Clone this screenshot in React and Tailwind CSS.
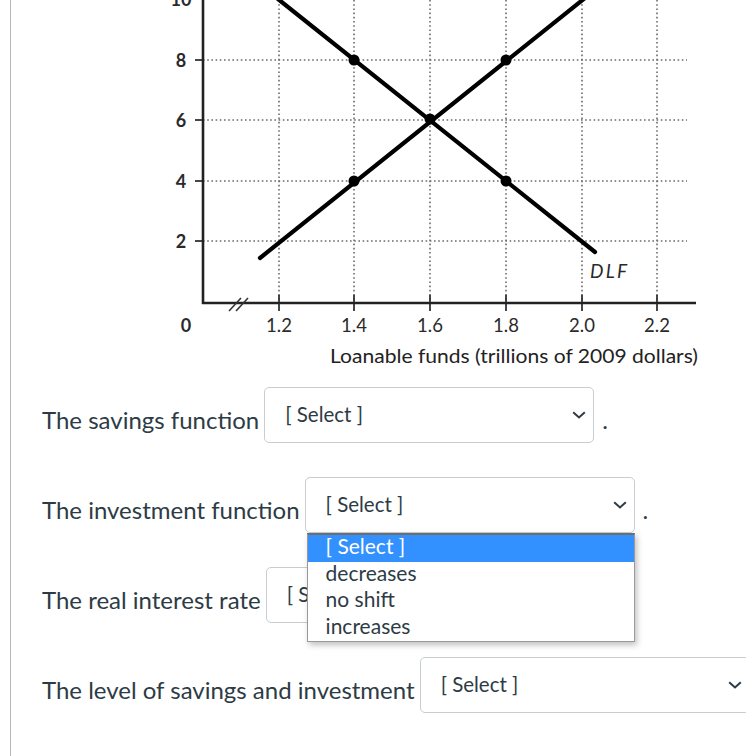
import React from "react";

const GX = [279, 354, 430, 506, 582, 657];
const XL = ["1.2", "1.4", "1.6", "1.8", "2.0", "2.2"];
const GY = [-1, 60, 120, 181, 241];
const YL = ["10", "8", "6", "4", "2"];

function Chart() {
  const font = "'Lato', 'Open Sans', sans-serif";
  return (
    <svg width="735" height="372" viewBox="11 0 735 372" className="block">
      {GY.map((y) => (
        <line key={"h" + y} x1="203" y1={y} x2="687" y2={y} stroke="#6b6b6b" strokeWidth="1.6" strokeDasharray="1.6 2.6" />
      ))}
      {GX.map((x) => (
        <line key={"v" + x} x1={x} y1="0" x2={x} y2="303" stroke="#6b6b6b" strokeWidth="1.6" strokeDasharray="1.6 2.6" />
      ))}
      {GY.map((y) => (
        <line key={"t" + y} x1="195" y1={y} x2="203" y2={y} stroke="#333" strokeWidth="1.8" />
      ))}
      {GX.map((x) => (
        <line key={"xt" + x} x1={x} y1="295" x2={x} y2="311" stroke="#333" strokeWidth="1.8" />
      ))}
      <line x1="203" y1="0" x2="203" y2="304" stroke="#222" strokeWidth="2.6" />
      <line x1="202" y1="303" x2="696" y2="303" stroke="#222" strokeWidth="2.6" />
      <line x1="229" y1="311" x2="241" y2="298" stroke="#333" strokeWidth="1.6" />
      <line x1="236" y1="311" x2="248" y2="298" stroke="#333" strokeWidth="1.6" />
      {/* DLF */}
      <line x1="278" y1="-1" x2="595" y2="252" stroke="#000" strokeWidth="4.2" strokeLinecap="round" />
      {/* SLF */}
      <line x1="260" y1="258" x2="590" y2="-6" stroke="#000" strokeWidth="4.2" strokeLinecap="round" />
      {[[354, 60], [506, 60], [430, 119], [354, 181], [506, 181]].map(([x, y]) => (
        <circle key={x + "-" + y} cx={x} cy={y} r="5.5" fill="#000" />
      ))}
      {YL.map((t, i) => (
        <text key={t} x="181" y={GY[i] + 6.5} textAnchor="middle" fontFamily={font} fontSize="18" fontWeight="700" fill="#2a2a2a">
          {t}
        </text>
      ))}
      <text x="186" y="331.5" textAnchor="middle" fontFamily={font} fontSize="18" fontWeight="700" fill="#2a2a2a">0</text>
      {XL.map((t, i) => (
        <text key={t} x={GX[i]} y="331.5" textAnchor="middle" fontFamily={font} fontSize="18.5" fill="#2a2a2a">
          {t}
        </text>
      ))}
      <text x="590" y="278" fontFamily={font} fontSize="19" fontStyle="italic" letterSpacing="2.2" fill="#2a2a2a">DLF</text>
      <text x="330" y="363" fontFamily={font} fontSize="18.5" fill="#222" textLength="368" lengthAdjust="spacingAndGlyphs">
        Loanable funds (trillions of 2009 dollars)
      </text>
    </svg>
  );
}

function Chevron() {
  return (
    <svg width="14" height="8" viewBox="0 0 14 8" className="block">
      <polyline points="1.2,1.2 7,6.5 12.8,1.2" fill="none" stroke="#2d3b45" strokeWidth="2" />
    </svg>
  );
}

function SelectBox({ children }) {
  return (
    <div className="relative ml-[5px] w-[330px] h-[56px] shrink-0 bg-white border border-[#c7cdd1] rounded-[5px] flex items-center justify-between pl-[20px] pr-[7px]">
      <span className="text-[20.5px] leading-[26px] text-[#2d3b45] -mt-[2px]">[ Select ]</span>
      <Chevron />
      {children}
    </div>
  );
}

function Row({ label, children, period = true }) {
  return (
    <div className="flex items-start h-[56px] mb-[34px] whitespace-nowrap">
      <span className="mt-[18px] text-[24px] leading-[30px] text-[#2d3b45]">{label}</span>
      <SelectBox>{children}</SelectBox>
      {period && <span className="mt-[18px] ml-[8px] text-[24px] leading-[30px] text-[#2d3b45]">.</span>}
    </div>
  );
}

export default function App() {
  return (
    <div className="w-[746px] h-[756px] overflow-hidden bg-white" style={{ fontFamily: "'Lato', 'Open Sans', sans-serif" }}>
      <div className="ml-[10px] h-full border-l border-[#b8b8b8]">
        <Chart />
        <div className="pl-[31px] mt-[15px]">
          <Row label="The savings function" />
          <div className="relative z-10">
            <Row label="The investment function">
              <div className="absolute left-[1px] top-[55px] w-[328px] bg-white border border-[#9a9a9a] border-t-2 border-t-[#6e6e6e] shadow-[2px_3px_6px_rgba(0,0,0,0.25)] text-[21px] text-[#2d3b45]">
                <div className="bg-[#3390ff] text-white pl-[18px] leading-[22.5px] pb-[4px]">[ Select ]</div>
                <div className="pl-[18px] leading-[22.5px] pb-[4px]">decreases</div>
                <div className="pl-[18px] leading-[22.5px] pb-[4px]">no shift</div>
                <div className="pl-[18px] leading-[22.5px] pb-[4px]">increases</div>
              </div>
            </Row>
          </div>
          <Row label="The real interest rate" />
          <Row label="The level of savings and investment" />
        </div>
      </div>
    </div>
  );
}
